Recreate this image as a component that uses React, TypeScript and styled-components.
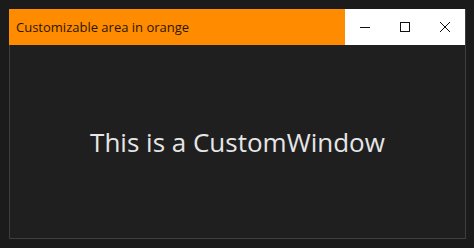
import React from "react";
import styled, {createGlobalStyle} from "styled-components";

const GlobalStyle = createGlobalStyle`
html, body {
margin: 0;
padding: 0;
background: #1b1b1b;
}
#root {
width: 474px;
height: 248px;
}
`

const Desktop = styled.div`
width: 474px;
height: 248px;
padding: 9px 8px 9px 9px;
box-sizing: border-box;
display: flex;
`

const Window = styled.div`
flex: 1;
display: flex;
flex-direction: column;
background: #1f1f1f;
border: 1px solid #3e3e3e;
border-top: none;
border-left: none;
`

const TitleBar = styled.div`
display: flex;
height: 36px;
flex-shrink: 0;
`

const DragArea = styled.div`
flex: 1;
display: flex;
align-items: center;
padding-left: 7px;
background: #ff8c00;
color: #2a1600;
font-family: "Open Sans", "Noto Sans", sans-serif;
font-size: 13px;
`

const Buttons = styled.div`
display: flex;
background: #ffffff;
`

const CaptionButton = styled.div`
width: 40px;
display: flex;
align-items: center;
justify-content: center;
`

const Content = styled.div`
flex: 1;
display: flex;
align-items: center;
justify-content: center;
border-left: 1px solid #3e3e3e;
color: #e6e6e6;
font-family: "Open Sans", "Noto Sans", sans-serif;
font-size: 26px;
`

const Glyph = ({children}: { children: React.ReactNode }) =>
    <svg width="12" height="12" viewBox="0 0 12 12" fill="none" stroke="#111" strokeWidth="1">
        {children}
    </svg>

const App = () => {
    return <>
        <GlobalStyle/>
        <Desktop>
            <Window>
                <TitleBar>
                    <DragArea>Customizable area in orange</DragArea>
                    <Buttons>
                        <CaptionButton>
                            <Glyph><path d="M1 6.5h10"/></Glyph>
                        </CaptionButton>
                        <CaptionButton>
                            <Glyph><rect x="1.5" y="1.5" width="9" height="9"/></Glyph>
                        </CaptionButton>
                        <CaptionButton>
                            <Glyph><path d="M1 1l10 10M11 1L1 11"/></Glyph>
                        </CaptionButton>
                    </Buttons>
                </TitleBar>
                <Content>This is a CustomWindow</Content>
            </Window>
        </Desktop>
    </>
}

export default App
